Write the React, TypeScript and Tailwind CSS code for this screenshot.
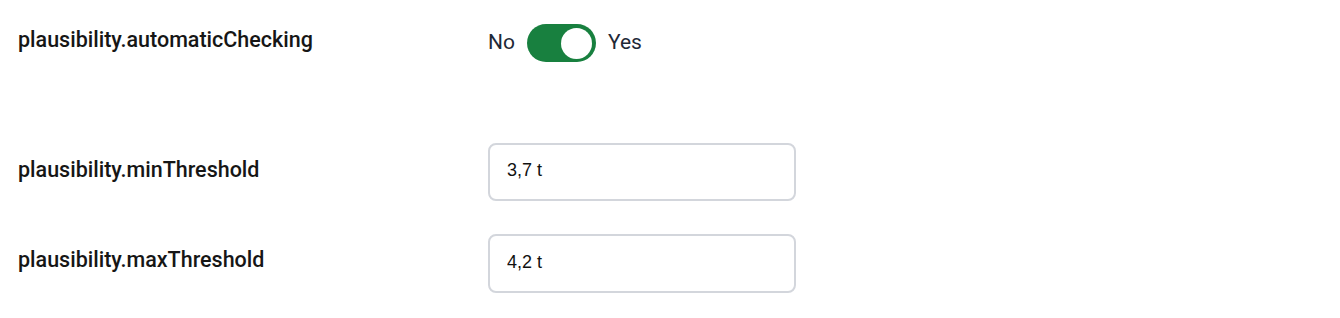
import React, { useState } from 'react';

const labelClass =
  "w-[488px] shrink-0 pl-[18px] text-[21.5px] leading-[28px] font-medium text-[#161616] font-['Roboto',sans-serif]";

const inputClass =
  "w-[308px] rounded-lg border-2 border-[#d3d6dc] bg-white pl-[17px] pb-[3px] text-[18px] text-[#111] font-['Liberation_Sans',Arial,sans-serif] outline-none";

const App: React.FC = () => {
  const [checking, setChecking] = useState(true);
  const [minValue, setMinValue] = useState('3,7 t');
  const [maxValue, setMaxValue] = useState('4,2 t');

  return (
    <div className="min-h-screen bg-white font-['Roboto',sans-serif]">
      <div className="flex flex-col pt-[24px]">
        <div className="flex items-start">
          <div className={`${labelClass} mt-[2px]`}>plausibility.automaticChecking</div>
          <div className="flex items-center gap-3 text-[21px] text-[#1f2937]">
            <span>No</span>
            <button
              type="button"
              onClick={() => setChecking(!checking)}
              className={`flex h-[38px] w-[69px] items-center rounded-full px-[4px] ${
                checking ? 'justify-end bg-[#18803f]' : 'justify-start bg-gray-300'
              }`}
            >
              <span className="block h-[31px] w-[31px] rounded-full bg-white" />
            </button>
            <span>Yes</span>
          </div>
        </div>

        <div className="mt-[81px] flex items-start">
          <div className={`${labelClass} mt-[13px]`}>plausibility.minThreshold</div>
          <input
            value={minValue}
            onChange={(e) => setMinValue(e.target.value)}
            className={`${inputClass} h-[58px]`}
          />
        </div>

        <div className="mt-[33px] flex items-start">
          <div className={`${labelClass} mt-[12px]`}>plausibility.maxThreshold</div>
          <input
            value={maxValue}
            onChange={(e) => setMaxValue(e.target.value)}
            className={`${inputClass} h-[59px]`}
          />
        </div>
      </div>
    </div>
  );
};

export default App;
